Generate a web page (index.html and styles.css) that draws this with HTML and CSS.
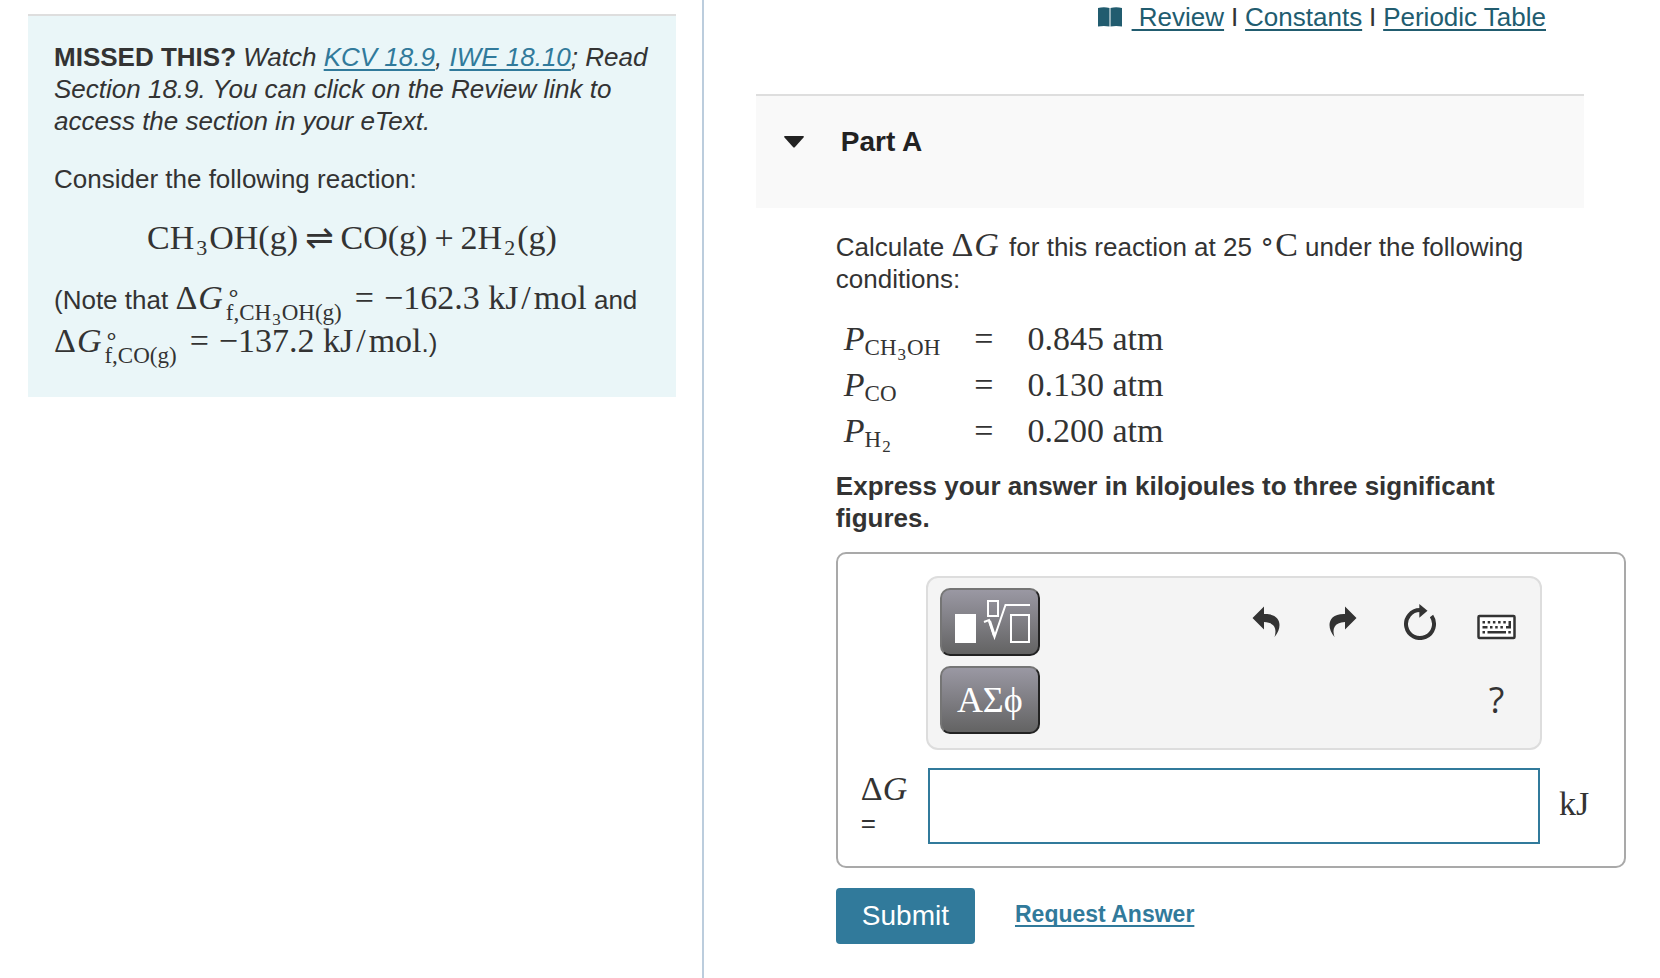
FILE: index.html
```html
<!DOCTYPE html>
<html lang="en">
<head>
<meta charset="utf-8">
<title>Part A</title>
<link rel="stylesheet" href="styles.css">
</head>
<body>
<div class="layout">
  <aside class="intro-pane">
    <section class="intro">
      <p><strong>MISSED THIS?</strong> <em>Watch <a href="#kcv">KCV 18.9</a>, <a href="#iwe">IWE 18.10</a>; Read Section 18.9. You can click on the Review link to access the section in your eText.</em></p>
      <p>Consider the following reaction:</p>
      <p class="equation math">CH<sub>3</sub>OH(g)<span class="op arrow">⇌</span>CO(g)<span class="op">+</span>2H<sub>2</sub>(g)</p>
      <p class="note">(Note that <span class="math">Δ<i>G</i><span class="scripts"><span class="upper">∘</span><span class="lower">f,CH<sub>3</sub>OH(g)</span></span><span class="rel">=</span>−162.3 kJ<span class="slash">/</span>mol</span> and <span class="math">Δ<i>G</i><span class="scripts"><span class="upper">∘</span><span class="lower">f,CO(g)</span></span><span class="rel">=</span>−137.2 kJ<span class="slash">/</span>mol</span>.)</p>
    </section>
  </aside>
  <main class="work-pane">
    <nav class="resources">
      <svg class="book" viewBox="0 0 24 20" aria-hidden="true"><path d="M0 1Q6-.5 11.500 1V19.500Q6 18.500 0 19.500ZM24 1Q18-.5 12.500 1V19.500Q18 18.500 24 19.500Z"/></svg>
      <a class="review" href="#review">&nbsp;Review</a><span class="bar">I</span><a href="#constants">Constants</a><span class="bar">I</span><a href="#periodic">Periodic Table</a>
    </nav>
    <header class="part-header">
      <svg class="caret" viewBox="0 0 20 12" aria-hidden="true"><path d="M1 0H19Q20.500 0 19.500 1.500L11 11Q10 12 9 11L.5 1.500Q-.5 0 1 0Z"/></svg>
      <h2>Part A</h2>
    </header>
    <div class="part-body">
      <p class="question">Calculate <span class="math">Δ<i>G</i></span> for this reaction at 25 <span class="math"><span class="degree">∘</span>C</span> under the following conditions:</p>
      <table class="conditions math">
        <tr><td><i>P</i><span class="lower">CH<sub>3</sub>OH</span></td><td class="eq">=</td><td>0.845 atm</td></tr>
        <tr><td><i>P</i><span class="lower">CO</span></td><td class="eq">=</td><td>0.130 atm</td></tr>
        <tr><td><i>P</i><span class="lower">H<sub>2</sub></span></td><td class="eq">=</td><td>0.200 atm</td></tr>
      </table>
      <p class="instruction">Express your answer in kilojoules to three significant figures.</p>
      <form class="answer">
        <div class="toolbar">
          <div class="palettes">
            <button class="palette" type="button" aria-label="Templates"><svg viewBox="0 0 96 64" aria-hidden="true"><path fill="#fff" d="M13 24h21v29H13z"/><g fill="none" stroke="#fff" stroke-width="2"><path d="M46 11h10v15H46zM69 25h18v27H69z"/><path d="M42 32l5-2 5.500 17L63.500 15H88"/><path stroke-width="3" d="M47.500 31l5 15"/></g></svg></button>
            <button class="palette greek" type="button" aria-label="Symbols">ΑΣϕ</button>
          </div>
          <div class="actions">
            <button type="button" aria-label="undo"><svg viewBox="0 0 40 40"><path d="M6.500 18L18 6.500v7.500C29 13.500 33.500 19 33.500 25Q33.500 31 28.500 37C31 29 29 22.500 18 22v7.500Z"/></svg></button>
            <button type="button" aria-label="redo"><svg viewBox="0 0 40 40"><path d="M33.500 18L22 6.500v7.500C11 13.500 6.500 19 6.500 25Q6.500 31 11.500 37C9 29 11 22.500 22 22v7.500Z"/></svg></button>
            <button type="button" aria-label="reset"><svg viewBox="0 0 40 40"><path d="M20 10A14 14 0 1 0 31.500 16" fill="none" stroke="#333" stroke-width="4"/><path d="M19.300 4L27.500 10.800L19.300 17.800Z"/></svg></button>
            <button type="button" aria-label="keyboard shortcuts"><svg viewBox="0 0 40 40"><rect x="1.500" y="16" width="36" height="22" rx="1" fill="#fff" stroke="#333" stroke-width="2.500"/><path d="M5.500 21H8v2.500H5.500zm5.200 0h2.500v2.500h-2.500zm5.200 0h2.500v2.500h-2.500zm5.200 0h2.500v2.500h-2.500zm5.200 0h2.500v2.500h-2.500zm5.200 0H34v7.500h-5V26h2.500zM5.500 26h5v2.500h-5zm7.500 0h2.500v2.500H13zm5.200 0h2.500v2.500h-2.500zm5.200 0h2.500v2.500h-2.500zM5.500 31H8v2.500H5.500zm5 0H29v2.500H10.500zm20.800 0h2.500v2.500h-2.500z"/></svg></button>
            <button class="help" type="button" aria-label="help">?</button>
          </div>
        </div>
        <label class="variable" for="answer"><span class="math">Δ<i>G</i></span><span>=</span></label>
        <input class="field" id="answer" type="text">
        <span class="unit math">kJ</span>
      </form>
      <div class="submit-row">
        <button class="submit" type="button">Submit</button>
        <a class="request" href="#answer">Request Answer</a>
      </div>
    </div>
  </main>
</div>
</body>
</html>
```
FILE: styles.css
```css
* { box-sizing: border-box; }
body {
  margin: 0;
  background: #fff;
  color: #333;
  font: 26px/32px "Liberation Sans", Arial, sans-serif;
}
p, h2 { margin: 0; }
a { color: #317a9b; text-decoration-thickness: 2px; text-underline-offset: 3px; text-decoration-skip-ink: none; }
button, input { font: inherit; color: inherit; }
.layout { display: grid; grid-template-columns: 42.4% 1fr; min-height: 100vh; }
.intro-pane { border-right: 2px solid #bccddd; padding: 14px 26px 28px 28px; }
.intro {
  background: #eaf6f8;
  border-top: 2px solid #dedede;
  padding: 25px 26px 30px;
  display: flex;
  flex-direction: column;
  gap: 26px;
}
.math { font-family: "Liberation Serif", "Times New Roman", serif; font-size: 34px; white-space: nowrap; }
.math i { margin: 0 3px 0 1px; }
.math sub { font-size: 22px; line-height: 0; vertical-align: -6px; margin: 0 2px; }
.equation { text-align: center; line-height: 34px; }
.op { margin: 0 7px; }
.arrow { font-family: "DejaVu Sans", sans-serif; line-height: 0; }
.note { line-height: 34px; }
.lower { font-size: 23px; }
.math .lower sub { font-size: 17px; vertical-align: -5px; margin: 0 1px; }
.scripts { display: inline-flex; flex-direction: column; vertical-align: 8px; }
.scripts .lower { line-height: 22px; }
.upper { font-size: 24px; line-height: 18px; }
.rel { margin: 0 10px 0 13px; }
.slash { margin: 0 3px; }
.work-pane { padding: 1px 34px 34px 52px; }
.resources { display: flex; align-items: center; justify-content: flex-end; padding-right: 80px; }
.resources a { color: #215c6f; }
.book { width: 24px; height: 20px; fill: #215c6f; margin-right: 10px; }
.bar { width: 21px; text-align: center; }
.part-header {
  display: flex;
  gap: 37px;
  height: 114px;
  margin: 61px 42px 0 0;
  padding: 30px 28px;
  background: #f9f9f9;
  border-top: 2px solid #dedede;
  color: #222;
}
.caret { width: 20px; height: 12px; margin-top: 10px; fill: #222; }
h2 { font-size: 28px; line-height: 32px; }
.part-body { padding: 23px 0 0 80px; }
.question { padding-right: 60px; }
.question .math { line-height: 0; }
.degree { font-size: 26px; vertical-align: 6px; }
.conditions { border-spacing: 0; margin: 21px 0 16px 8px; }
.conditions td { padding: 0 34px 0 0; height: 46px; line-height: 44px; }
.conditions i { margin: 0; }
.conditions .lower { vertical-align: -5px; line-height: 0; }
.instruction { font-weight: bold; padding-right: 60px; }
.answer {
  display: grid;
  grid-template-columns: 66px 1fr 64px;
  row-gap: 18px;
  margin-top: 18px;
  padding: 22px 18px 22px 22px;
  border: 2px solid #a9a9a9;
  border-radius: 10px;
}
.toolbar {
  grid-column: 2;
  display: flex;
  justify-content: space-between;
  padding: 10px 5px 14px 12px;
  border: 2px solid #ddd;
  border-radius: 12px;
  background: #f4f4f4;
}
.palettes { display: grid; gap: 10px; }
.palette {
  display: block;
  width: 100px;
  height: 68px;
  padding: 0;
  border: 2px solid;
  border-color: #757575 #222 #222 #757575;
  border-radius: 10px;
  background: linear-gradient(#9a98a3, #636363);
  color: #fff;
}
.palette svg { display: block; width: 96px; height: 64px; }
.palette.greek { font: 36px/60px "Liberation Serif", "Times New Roman", serif; }
.actions { display: grid; grid-template-columns: repeat(4, 77px); grid-template-rows: 78px 68px; }
.actions button { padding: 0; border: 0; background: none; }
.actions svg { display: block; width: 40px; height: 40px; margin: 12px auto 26px; fill: #333; }
.actions .help { grid-column: 4; font: 36px/66px "Open Sans", sans-serif; }
.variable { grid-column: 1; display: flex; flex-direction: column; padding: 4px 0 0 1px; line-height: 34px; }
.variable i { margin: 0; }
.field { width: auto; min-width: 0; height: 76px; margin: 0 2px; border: 2px solid #317a9b; background: #fff; padding: 0 12px; }
.unit { padding: 20px 0 0 17px; }
.submit-row { display: flex; gap: 40px; margin-top: 20px; }
.submit { padding: 12px 26px; border: 0; border-radius: 4px; background: #317a9b; color: #fff; font-size: 28px; }
.request { font-size: 23px; line-height: 52px; font-weight: bold; }
```
